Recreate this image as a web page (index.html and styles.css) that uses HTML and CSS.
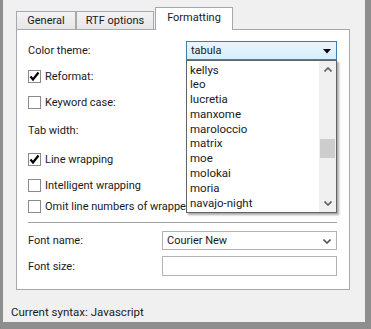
FILE: index.html
```html
<!DOCTYPE html>
<html>
<head>
<meta charset="utf-8">
<link rel="stylesheet" href="styles.css">
</head>
<body>
<div class="window">
  <div class="tabs">
    <div class="tab tab-general">General</div>
    <div class="tab tab-rtf">RTF options</div>
    <div class="tab tab-active">Formatting</div>
  </div>
  <div class="panel">
    <div class="form">
      <div class="row">
        <span class="label">Color theme:</span>
        <div class="combo combo-theme">
          <span class="combo-text">tabula</span>
          <svg class="arrow-solid" width="8" height="5" viewBox="0 0 8 5"><polygon points="0,0 8,0 4,4.5" fill="#000"/></svg>
          <div class="dropdown">
            <ul class="items">
              <li>kellys</li>
              <li>leo</li>
              <li>lucretia</li>
              <li>manxome</li>
              <li>maroloccio</li>
              <li>matrix</li>
              <li>moe</li>
              <li>molokai</li>
              <li>moria</li>
              <li>navajo-night</li>
            </ul>
            <div class="scrollbar">
              <div class="sb-btn"><svg width="8" height="5" viewBox="0 0 8 5"><polyline points="0.5,4.5 4,1 7.5,4.5" fill="none" stroke="#606060" stroke-width="1.6"/></svg></div>
              <div class="sb-track"><div class="sb-thumb"></div></div>
              <div class="sb-btn"><svg width="8" height="5" viewBox="0 0 8 5"><polyline points="0.5,0.5 4,4 7.5,0.5" fill="none" stroke="#606060" stroke-width="1.6"/></svg></div>
            </div>
          </div>
        </div>
      </div>
      <div class="row">
        <span class="check checked"><svg width="11" height="11" viewBox="0 0 11 11"><polyline points="1.5,5.5 4,8.5 9.5,1.5" fill="none" stroke="#000" stroke-width="2.2"/></svg></span>
        <span class="check-label">Reformat:</span>
      </div>
      <div class="row">
        <span class="check"></span>
        <span class="check-label">Keyword case:</span>
      </div>
      <div class="row">
        <span class="label">Tab width:</span>
      </div>
      <div class="row">
        <span class="check checked"><svg width="11" height="11" viewBox="0 0 11 11"><polyline points="1.5,5.5 4,8.5 9.5,1.5" fill="none" stroke="#000" stroke-width="2.2"/></svg></span>
        <span class="check-label">Line wrapping</span>
      </div>
      <div class="row">
        <span class="check"></span>
        <span class="check-label">Intelligent wrapping</span>
      </div>
      <div class="row">
        <span class="check"></span>
        <span class="check-label">Omit line numbers of wrapped lines</span>
      </div>
      <div class="row row-sep"><div class="separator"></div></div>
      <div class="row">
        <span class="label">Font name:</span>
        <div class="combo combo-font">
          <span class="combo-text">Courier New</span>
          <svg class="arrow-chevron" width="8" height="5" viewBox="0 0 8 5"><polyline points="0.5,0.5 4,4 7.5,0.5" fill="none" stroke="#555" stroke-width="1.6"/></svg>
        </div>
      </div>
      <div class="row">
        <span class="label">Font size:</span>
        <div class="input"></div>
      </div>
    </div>
  </div>
  <div class="status">Current syntax: Javascript</div>
</div>
</body>
</html>
```

FILE: styles.css
```css
* { box-sizing: border-box; }
html, body { margin: 0; padding: 0; }
body {
  background: #f0f0f0;
  font-family: Roboto, "Noto Sans", sans-serif;
  font-size: 11px;
  color: #1a1a1a;
}
.window {
  width: 371px;
  height: 329px;
  background: #f0f0f0;
  border-left: 3px solid #8e8e8e;
  border-right: 6px solid #8e8e8e;
  border-bottom: 7px solid #8e8e8e;
  overflow: hidden;
}
.tabs {
  display: flex;
  align-items: flex-end;
  height: 22px;
  margin-top: 7px;
  margin-left: 13px;
}
.tab {
  height: 18px;
  border: 1px solid #a6a8ad;
  border-bottom: none;
  background: linear-gradient(#f3f3f3, #e6e6e6);
  text-align: center;
  line-height: 17px;
  white-space: nowrap;
}
.tab-general { width: 60px; }
.tab-rtf { width: 78px; }
.tab-active {
  width: 78px;
  height: 23px;
  margin-left: 1px;
  margin-bottom: -1px;
  background: #fff;
  position: relative;
  z-index: 1;
  line-height: 19px;
}
.panel {
  margin-left: 13px;
  width: 334px;
  height: 261px;
  border: 1px solid #a6a8ad;
  background: #fff;
}
.form {
  display: grid;
  grid-template-rows: 26px 26px 26px 30px 28px 24px 18px 14px 22px 30px;
  padding: 7px 12px 0 11px;
}
.row {
  display: flex;
  align-items: center;
  position: relative;
  white-space: nowrap;
}
.check {
  width: 13px;
  height: 13px;
  border: 1px solid #8a8a8a;
  background: #fff;
  flex: none;
  display: flex;
  align-items: center;
  justify-content: center;
}
.check-label { margin-left: 4px; }
.separator {
  width: 309px;
  height: 1px;
  background: #a0a0a0;
}
.combo {
  margin-left: auto;
  height: 19px;
  position: relative;
  display: flex;
  align-items: center;
  padding-left: 4px;
}
.combo-theme {
  width: 151px;
  border: 1px solid #3c7fb1;
  background: linear-gradient(#eaf6fd, #d6eefc);
}
.arrow-solid { position: absolute; right: 5px; top: 7px; }
.combo-font {
  width: 175px;
  border: 1px solid #b2b2b2;
  background: #fff;
}
.arrow-chevron { position: absolute; right: 5px; top: 7px; }
.input {
  margin-left: auto;
  width: 175px;
  height: 20px;
  border: 1px solid #b2b2b2;
  background: #fff;
}
.dropdown {
  position: absolute;
  left: -1px;
  top: 18px;
  width: 151px;
  height: 153px;
  border: 1px solid #646464;
  background: #fff;
  box-shadow: 2px 2px 2px rgba(0,0,0,0.35);
  z-index: 5;
}
.items {
  list-style: none;
  margin: 0;
  padding: 2px 0 0 3px;
  font-size: 11.5px;
}
.items li { line-height: 14.8px; height: 14.8px; }
.scrollbar {
  position: absolute;
  top: 0;
  right: 0;
  bottom: 0;
  width: 17px;
  background: #f0f0f0;
  display: flex;
  flex-direction: column;
}
.sb-btn {
  height: 17px;
  display: flex;
  align-items: center;
  justify-content: center;
}
.sb-track { flex: 1; }
.sb-thumb {
  margin: 61px 1px 0 1px;
  height: 19px;
  background: #cdcdcd;
}
.status {
  padding: 14px 0 0 8px;
  line-height: 16px;
  font-size: 11.5px;
}
```
